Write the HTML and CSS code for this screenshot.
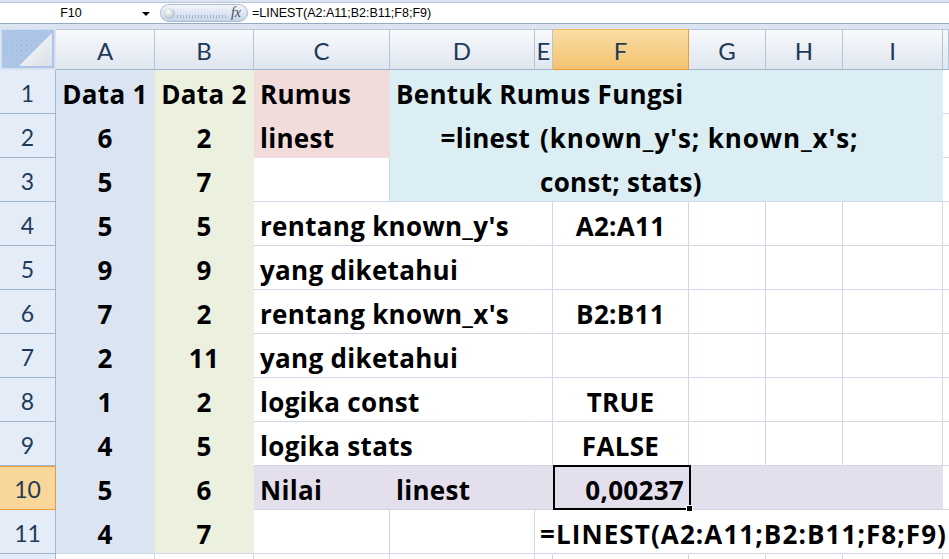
FILE: index.html
```html
<!DOCTYPE html>
<html>
<head>
<meta charset="utf-8">
<link rel="stylesheet" href="styles.css">
</head>
<body>
<div class="fbar">
  <div class="fbar-row">
    <div class="namebox"><span class="nb-text">F10</span><span class="nb-arrow"></span></div>
    <div class="pill"><span class="knob"></span><span class="ticks"></span><span class="fx">fx</span></div>
    <div class="formula">=LINEST(A2:A11;B2:B11;F8;F9)</div>
  </div>
</div>
<div class="sheet">
  <div class="hd corner">
    <svg width="56" height="41" viewBox="0 0 56 41">
      <defs>
        <pattern id="dots" width="5" height="5" patternUnits="userSpaceOnUse">
          <rect x="1" y="1" width="1" height="1" fill="#8fb8e3"/>
        </pattern>
        <linearGradient id="tri" x1="0" y1="0" x2="1" y2="1">
          <stop offset="0" stop-color="#ffffff"/>
          <stop offset="1" stop-color="#d8dfe7"/>
        </linearGradient>
      </defs>
      <rect x="1.5" y="0.5" width="53" height="39" fill="#adc5e7" stroke="#d3dff0"/>
      <rect x="2" y="1" width="52" height="38" fill="url(#dots)"/>
      <polygon points="19,37 52,37 52,4" fill="url(#tri)"/>
    </svg>
  </div>
  <div class="hd">A</div>
  <div class="hd">B</div>
  <div class="hd">C</div>
  <div class="hd">D</div>
  <div class="hd">E</div>
  <div class="hd sel">F</div>
  <div class="hd">G</div>
  <div class="hd">H</div>
  <div class="hd">I</div>
  <div class="hd"></div>

  <!-- row 1 -->
  <div class="rh">1</div>
  <div class="c a">Data 1</div>
  <div class="c b">Data 2</div>
  <div class="c pk">Rumus</div>
  <div class="c"></div>
  <!-- row 2 -->
  <div class="rh">2</div>
  <div class="c a">6</div>
  <div class="c b">2</div>
  <div class="c pk">linest</div>
  <div class="c"></div>
  <!-- row 3 -->
  <div class="rh">3</div>
  <div class="c a">5</div>
  <div class="c b">7</div>
  <div class="c"></div>
  <div class="c"></div>

  <div class="cyan">
    <div class="t">Bentuk Rumus Fungsi</div>
    <div class="t"></div>
    <div class="t"></div>
    <div class="t"></div>
    <div class="t"></div>
    <div class="t"></div>
    <div class="t rt">=linest</div>
    <div class="t e wide">(known_y's; known_x's;</div>
    <div class="t"></div>
    <div class="t"></div>
    <div class="t"></div>
    <div class="t"></div>
    <div class="t"></div>
    <div class="t e">const; stats)</div>
  </div>

  <!-- row 4 -->
  <div class="rh">4</div>
  <div class="c a">5</div>
  <div class="c b">5</div>
  <div class="c nr">rentang known_y's</div>
  <div class="c nr"></div>
  <div class="c"></div>
  <div class="c ctr">A2:A11</div>
  <div class="c"></div>
  <div class="c"></div>
  <div class="c"></div>
  <div class="c"></div>
  <!-- row 5 -->
  <div class="rh">5</div>
  <div class="c a">9</div>
  <div class="c b">9</div>
  <div class="c nr">yang diketahui</div>
  <div class="c nr"></div>
  <div class="c"></div>
  <div class="c ctr"></div>
  <div class="c"></div>
  <div class="c"></div>
  <div class="c"></div>
  <div class="c"></div>
  <!-- row 6 -->
  <div class="rh">6</div>
  <div class="c a">7</div>
  <div class="c b">2</div>
  <div class="c nr">rentang known_x's</div>
  <div class="c nr"></div>
  <div class="c"></div>
  <div class="c ctr">B2:B11</div>
  <div class="c"></div>
  <div class="c"></div>
  <div class="c"></div>
  <div class="c"></div>
  <!-- row 7 -->
  <div class="rh">7</div>
  <div class="c a">2</div>
  <div class="c b">11</div>
  <div class="c nr">yang diketahui</div>
  <div class="c nr"></div>
  <div class="c"></div>
  <div class="c ctr"></div>
  <div class="c"></div>
  <div class="c"></div>
  <div class="c"></div>
  <div class="c"></div>
  <!-- row 8 -->
  <div class="rh">8</div>
  <div class="c a">1</div>
  <div class="c b">2</div>
  <div class="c nr">logika const</div>
  <div class="c nr"></div>
  <div class="c"></div>
  <div class="c ctr">TRUE</div>
  <div class="c"></div>
  <div class="c"></div>
  <div class="c"></div>
  <div class="c"></div>
  <!-- row 9 -->
  <div class="rh">9</div>
  <div class="c a">4</div>
  <div class="c b">5</div>
  <div class="c nr">logika stats</div>
  <div class="c nr"></div>
  <div class="c"></div>
  <div class="c ctr">FALSE</div>
  <div class="c"></div>
  <div class="c"></div>
  <div class="c"></div>
  <div class="c"></div>
  <!-- row 10 -->
  <div class="rh sel">10</div>
  <div class="c a">5</div>
  <div class="c b">6</div>
  <div class="lav">
    <div class="t">Nilai</div>
    <div class="t">linest</div>
    <div class="t"></div>
    <div class="t active">0,00237<span class="handle"></span></div>
    <div class="t"></div>
    <div class="t"></div>
    <div class="t"></div>
  </div>
  <div class="c"></div>
  <!-- row 11 -->
  <div class="rh">11</div>
  <div class="c a last">4</div>
  <div class="c b last">7</div>
  <div class="c"></div>
  <div class="c"></div>
  <div class="c nr e11">=LINEST(A2:A11;B2:B11;F8;F9)</div>
  <div class="c nr"></div>
  <div class="c nr"></div>
  <div class="c nr"></div>
  <div class="c nr"></div>
  <div class="c"></div>
  <!-- row 12 (partial) -->
  <div class="rh part"></div>
  <div class="c part"></div>
  <div class="c part"></div>
  <div class="c part"></div>
  <div class="c part"></div>
  <div class="c part"></div>
  <div class="c part"></div>
  <div class="c part"></div>
  <div class="c part"></div>
  <div class="c part"></div>
  <div class="c part"></div>
</div>
</body>
</html>
```

FILE: styles.css
```css
html, body {
  margin: 0;
  padding: 0;
}
body {
  width: 949px;
  height: 559px;
  overflow: hidden;
  background: #ffffff;
  font-family: Lato, "Open Sans", sans-serif;
}

/* formula bar */
.fbar {
  height: 29px;
  box-sizing: border-box;
  padding-top: 2px;
  background: #dbe4f0;
}
.fbar-row {
  height: 22px;
  box-sizing: border-box;
  background: #ffffff;
  border-top: 1px solid #b7c5d8;
  border-bottom: 1px solid #93a9c6;
  display: flex;
  align-items: center;
  font-family: "Liberation Sans", Arial, sans-serif;
  font-size: 12.5px;
  color: #000;
}
.namebox {
  width: 160px;
  display: flex;
  align-items: center;
}
.nb-text {
  width: 142px;
  text-align: center;
}
.nb-arrow {
  width: 0;
  height: 0;
  border-left: 4px solid transparent;
  border-right: 4px solid transparent;
  border-top: 4px solid #000;
  margin-top: 1px;
}
.pill {
  width: 88px;
  height: 18px;
  box-sizing: border-box;
  border-radius: 9px;
  border: 1px solid #a8bad2;
  background: linear-gradient(#f4f7fb, #c6d5e9);
  display: flex;
  align-items: center;
  padding-left: 3px;
}
.knob {
  width: 11px;
  height: 11px;
  border-radius: 50%;
  background: radial-gradient(circle at 40% 35%, #ffffff, #9ea9b8);
  flex: none;
}
.ticks {
  flex: 1;
  height: 3px;
  margin-top: 6px;
  margin-left: 2px;
  background: repeating-linear-gradient(90deg, #a1b4cd 0 1px, transparent 1px 3px);
}
.fx {
  font-family: "Liberation Serif", serif;
  font-style: italic;
  font-size: 14px;
  color: #4a4a4a;
  padding: 0 6px 0 3px;
}
.formula {
  padding-left: 4px;
  white-space: nowrap;
}

/* sheet grid */
.sheet {
  display: grid;
  grid-template-columns: 56px 99px 99px 136px 145px 18px 136px 77px 77px 100px 6px;
  grid-template-rows: 41px repeat(11, 44px) 5px;
}
.hd {
  box-sizing: border-box;
  background: linear-gradient(#f7f9fc, #dfe6ef);
  border-top: 1px solid #b9c9dc;
  border-right: 1px solid #b3c5da;
  border-bottom: 1px solid #9eb6ce;
  display: flex;
  align-items: center;
  justify-content: center;
  padding-top: 3px;
  font-size: 24px;
  line-height: 1;
  color: #1f3a57;
}
.hd.corner {
  padding: 0;
  border: none;
  background: #dbe4f0;
  align-items: flex-start;
  justify-content: flex-start;
}
.hd.corner svg {
  display: block;
}
.hd.sel {
  background: linear-gradient(#f9dda3, #f3c36f);
  border-top-color: #f2b45c;
  border-right-color: #f29a3a;
  border-bottom-color: #f29a3a;
}
.rh {
  box-sizing: border-box;
  background: #e4ecf7;
  border-right: 1px solid #9eb6ce;
  border-bottom: 1px solid #9eb6ce;
  display: flex;
  align-items: center;
  justify-content: center;
  padding-top: 4px;
  font-size: 23px;
  line-height: 1;
  color: #1f3a57;
}
.rh.sel {
  background: #f9d699;
  border-right-color: #f29a3a;
  border-bottom-color: #f29a3a;
  box-shadow: inset 0 1px 0 #f29a3a;
}
.rh.part {
  border-bottom: none;
}

.c {
  box-sizing: border-box;
  min-width: 0;
  border-right: 1px solid #d0d7e5;
  border-bottom: 1px solid #d0d7e5;
  display: flex;
  align-items: center;
  justify-content: flex-start;
  padding: 4px 0 0 6px;
  font-family: "Open Sans", Lato, sans-serif;
  font-size: 26px;
  letter-spacing: 0.3px;
  font-weight: 700;
  line-height: 1;
  color: #000;
  white-space: nowrap;
}
.c.a {
  background: #dbe5f1;
  border-color: #dbe5f1;
  justify-content: center;
  padding-left: 0;
}
.c.b {
  background: #ebf1de;
  border-color: #ebf1de;
  justify-content: center;
  padding-left: 0;
}
.c.a.last,
.c.b.last {
  border-bottom-color: #d0d7e5;
}
.c.pk {
  background: #f2dcdb;
  border-color: #f2dcdb;
}
.c.ctr {
  justify-content: center;
  padding-left: 0;
}
.c.nr {
  border-right-color: transparent;
}
.c.e11 {
  padding-left: 5px;
  letter-spacing: 1.1px;
}
.c.part {
  border-bottom: none;
}

.cyan {
  grid-column: 5 / 11;
  grid-row: 2 / 5;
  box-sizing: border-box;
  background: #daeef3;
  border-bottom: 1px solid #d0d7e5;
  display: grid;
  grid-template-columns: 145px 18px 136px 77px 77px 100px;
  grid-template-rows: 44px 44px 43px;
}
.lav {
  grid-column: 4 / 11;
  grid-row: 11;
  box-sizing: border-box;
  background: #e4dfec;
  border-bottom: 1px solid #d0d7e5;
  display: grid;
  grid-template-columns: 136px 145px 18px 136px 77px 77px 100px;
  grid-template-rows: 43px;
}
.t {
  min-width: 0;
  display: flex;
  align-items: center;
  padding: 4px 0 0 6px;
  font-family: "Open Sans", Lato, sans-serif;
  font-size: 26px;
  letter-spacing: 0.3px;
  font-weight: 700;
  line-height: 1;
  color: #000;
  white-space: nowrap;
}
.t.rt {
  justify-content: flex-end;
  padding: 4px 5px 0 0;
}
.t.e {
  padding-left: 5px;
}
.t.wide {
  letter-spacing: 0.9px;
}
.t.active {
  position: relative;
  justify-content: flex-end;
  padding: 4px 5px 0 0;
}
.t.active::before {
  content: "";
  position: absolute;
  left: 0;
  top: -1px;
  right: -2px;
  bottom: -1px;
  border: 2px solid #000;
}
.handle {
  position: absolute;
  right: -4px;
  bottom: -3px;
  width: 5px;
  height: 5px;
  background: #000;
  border: 1px solid #fff;
}
```
